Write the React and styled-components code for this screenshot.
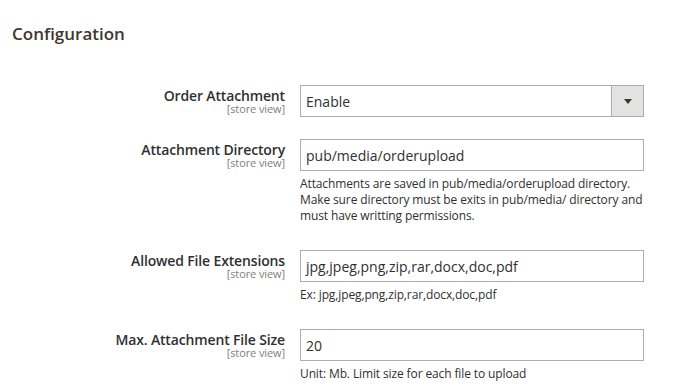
import React from "react";
import styled, { createGlobalStyle } from "styled-components";

const Global = createGlobalStyle`
  html, body { margin: 0; padding: 0; background: #ffffff; }
  body { font-family: "Open Sans", "Liberation Sans", sans-serif; color: #303030; }
  * { box-sizing: border-box; }
`;

const Page = styled.div`
  width: 700px;
  height: 391px;
  overflow: hidden;
  padding: 23px 0 0 12px;
`;

const Title = styled.h2`
  margin: 0 0 41px 0;
  font-size: 17px;
  line-height: 21px;
  font-weight: 600;
  color: #41362f;
`;

const Fieldset = styled.div`
  display: flex;
  flex-direction: column;
  margin-left: -12px;
`;

const Row = styled.div`
  display: grid;
  grid-template-columns: 285px 344px;
  column-gap: 15px;
  margin-bottom: 22px;
`;

const LabelCell = styled.div`
  text-align: right;
  padding-top: 2.5px;
`;

const Label = styled.label`
  display: block;
  font-size: 14px;
  line-height: 15px;
  font-weight: 600;
  letter-spacing: -0.15px;
  color: #303030;
`;

const Scope = styled.span`
  display: block;
  font-size: 11px;
  line-height: 12px;
  letter-spacing: -0.1px;
  color: #808080;
`;

const Control = styled.div`
  display: flex;
  flex-direction: column;
`;

const Input = styled.div`
  height: 32px;
  border: 1px solid #adadad;
  background: #fff;
  display: flex;
  align-items: center;
  padding: 0 5px;
  font-size: 14px;
  color: #303030;
`;

const Select = styled.div`
  height: 32px;
  border: 1px solid #adadad;
  background: #fff;
  display: flex;
  align-items: stretch;
  font-size: 14px;
  color: #303030;
`;

const SelectValue = styled.div`
  flex: 1;
  display: flex;
  align-items: center;
  padding: 0 5px;
`;

const SelectButton = styled.div`
  width: 32px;
  border-left: 1px solid #adadad;
  background: #e3e3e3;
  display: flex;
  align-items: center;
  justify-content: center;
`;

const Arrow = styled.span`
  width: 0;
  height: 0;
  border-left: 4px solid transparent;
  border-right: 4px solid transparent;
  border-top: 5px solid #41362f;
`;

const Note = styled.div`
  margin: 5px 0 4px 0;
  font-size: 12px;
  line-height: 16px;
  letter-spacing: -0.12px;
  color: #303030;
`;

const fields = [
  {
    label: "Order Attachment",
    type: "select",
    value: "Enable",
  },
  {
    label: "Attachment Directory",
    value: "pub/media/orderupload",
    note: "Attachments are saved in pub/media/orderupload directory. Make sure directory must be exits in pub/media/ directory and must have writting permissions.",
  },
  {
    label: "Allowed File Extensions",
    value: "jpg,jpeg,png,zip,rar,docx,doc,pdf",
    note: "Ex: jpg,jpeg,png,zip,rar,docx,doc,pdf",
  },
  {
    label: "Max. Attachment File Size",
    value: "20",
    note: "Unit: Mb. Limit size for each file to upload",
  },
];

export default function App() {
  return (
    <>
      <Global />
      <Page>
        <Title>Configuration</Title>
        <Fieldset>
          {fields.map((f) => (
            <Row key={f.label}>
              <LabelCell>
                <Label>{f.label}</Label>
                <Scope>[store view]</Scope>
              </LabelCell>
              <Control>
                {f.type === "select" ? (
                  <Select>
                    <SelectValue>{f.value}</SelectValue>
                    <SelectButton>
                      <Arrow />
                    </SelectButton>
                  </Select>
                ) : (
                  <Input>{f.value}</Input>
                )}
                {f.note && <Note>{f.note}</Note>}
              </Control>
            </Row>
          ))}
        </Fieldset>
      </Page>
    </>
  );
}
